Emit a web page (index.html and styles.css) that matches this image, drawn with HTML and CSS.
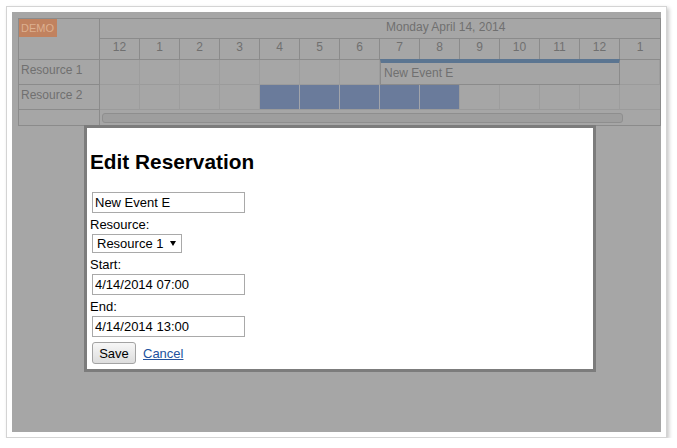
FILE: index.html
```html
<!DOCTYPE html>
<html>
<head>
<meta charset="utf-8">
<link rel="stylesheet" href="styles.css">
</head>
<body>
<div class="frame">
  <div class="stage">
    <div class="sched">
      <div class="hdr">
        <div class="corner"><span class="demo">DEMO</span></div>
        <div class="hdr-right">
          <div class="day">Monday April 14, 2014</div>
          <div class="hours">
            <div class="hc">12</div><div class="hc">1</div><div class="hc">2</div><div class="hc">3</div><div class="hc">4</div><div class="hc">5</div><div class="hc">6</div><div class="hc">7</div><div class="hc">8</div><div class="hc">9</div><div class="hc">10</div><div class="hc">11</div><div class="hc">12</div><div class="hc">1</div>
          </div>
        </div>
      </div>
      <div class="row">
        <div class="rh">Resource 1</div>
        <div class="cells">
          <div class="c"></div><div class="c"></div><div class="c"></div><div class="c"></div><div class="c"></div><div class="c"></div><div class="c"></div><div class="c"></div><div class="c"></div><div class="c"></div><div class="c"></div><div class="c"></div><div class="c"></div><div class="c"></div>
          <div class="event">New Event E</div>
        </div>
      </div>
      <div class="row">
        <div class="rh">Resource 2</div>
        <div class="cells">
          <div class="c"></div><div class="c"></div><div class="c"></div><div class="c"></div><div class="c sel"></div><div class="c sel"></div><div class="c sel"></div><div class="c sel"></div><div class="c sel last-sel"></div><div class="c"></div><div class="c"></div><div class="c"></div><div class="c"></div><div class="c"></div>
        </div>
      </div>
      <div class="row scroll">
        <div class="rh"></div>
        <div class="track"><div class="thumb"></div></div>
      </div>
    </div>

    <div class="modal">
      <h2>Edit Reservation</h2>
      <input class="field" type="text" value="New Event E">
      <div class="label">Resource:</div>
      <span class="select-wrap"><select class="select"><option>Resource 1</option></select></span>
      <div class="label">Start:</div>
      <input class="field" type="text" value="4/14/2014 07:00">
      <div class="label">End:</div>
      <input class="field" type="text" value="4/14/2014 13:00">
      <div class="actions">
        <button class="btn" type="button">Save</button><a class="cancel" href="#">Cancel</a>
      </div>
    </div>
  </div>
</div>
</body>
</html>
```

FILE: styles.css
```css
html, body {
  margin: 0;
  padding: 0;
  background: #ffffff;
}
body {
  padding: 6px 0 0 6px;
  font-family: "Liberation Sans", Arial, sans-serif;
}
.frame {
  width: 661px;
  height: 432px;
  box-sizing: border-box;
  border: 1px solid #d4d4d4;
  padding: 5px;
  background: #fff;
  box-shadow: 2px 2px 4px rgba(0, 0, 0, 0.22);
}
.stage {
  position: relative;
  width: 649px;
  height: 420px;
  box-sizing: border-box;
  padding: 6px 0 0 6px;
  background: #a6a6a6;
}

/* scheduler */
.sched {
  width: 643px;
  box-sizing: border-box;
  border: 1px solid #8b8b8b;
  font-size: 12px;
  color: #707070;
}
.hdr {
  display: flex;
  border-bottom: 1px solid #8b8b8b;
}
.corner {
  width: 81px;
  box-sizing: border-box;
  border-right: 1px solid #8b8b8b;
  height: 40px;
}
.demo {
  display: inline-block;
  background: #c1825f;
  color: #ddb08f;
  font-size: 11px;
  line-height: 18px;
  height: 18px;
  padding: 0 3px 0 2px;
  width: 38px;
  box-sizing: border-box;
  vertical-align: top;
}
.hdr-right {
  flex: 1;
}
.day {
  height: 19px;
  line-height: 16px;
  border-bottom: 1px solid #8b8b8b;
  padding-left: 286px;
}
.hours {
  display: flex;
  height: 20px;
}
.hc {
  width: 40px;
  box-sizing: border-box;
  border-right: 1px solid #8b8b8b;
  text-align: center;
  line-height: 16px;
}
.hc:last-child {
  border-right: none;
}
.row {
  display: flex;
  height: 25px;
}
.rh {
  width: 81px;
  box-sizing: border-box;
  border-right: 1px solid #8b8b8b;
  border-bottom: 1px solid #8b8b8b;
  padding-left: 2px;
  line-height: 20px;
}
.cells {
  position: relative;
  display: flex;
  flex: 1;
}
.c {
  width: 40px;
  box-sizing: border-box;
  border-right: 1px solid #9d9d9d;
  border-bottom: 1px solid #9b9b9b;
}
.c:last-child {
  border-right: none;
}
.c.sel {
  background: #6a7b9b;
  border-right-color: #a1a4ab;
}
.c.last-sel {
  border-right-color: #9d9d9d;
}
.event {
  position: absolute;
  left: 280px;
  top: -1px;
  width: 240px;
  height: 26px;
  box-sizing: border-box;
  border: 1px solid #8b8b8b;
  border-top: 4px solid #5b7591;
  background: #a5a5a5;
  padding: 3px 0 0 3px;
  line-height: 14px;
}
.row.scroll {
  height: 15px;
}
.row.scroll .rh {
  border-bottom: none;
}
.track {
  flex: 1;
  padding: 3px 0 0 2px;
}
.thumb {
  width: 521px;
  height: 10px;
  box-sizing: border-box;
  border: 1px solid #8e8e8e;
  border-radius: 3px;
  background: #9e9e9e;
}

/* modal */
.modal {
  position: absolute;
  left: 72px;
  top: 113px;
  width: 512px;
  height: 247px;
  box-sizing: border-box;
  border: 3px solid #7c7c7c;
  background: #fff;
  padding: 22px 3px 0;
  font-size: 13px;
  color: #000;
}
.modal h2 {
  margin: 0 0 18px;
  font-size: 20.8px;
  line-height: 24px;
  font-weight: bold;
}
.field {
  display: block;
  margin: 0 0 0 2px;
  width: 153px;
  height: 21px;
  box-sizing: border-box;
  border: 1px solid #a9a9a9;
  padding: 0 2px;
  font-family: "Liberation Sans", Arial, sans-serif;
  font-size: 13px;
  color: #000;
  background: #fff;
  outline: none;
}
.label {
  line-height: 15px;
  margin: 4px 0 2px;
}
.select-wrap {
  position: relative;
  display: block;
  margin-left: 2px;
  width: 90px;
  height: 19px;
}
.select {
  -webkit-appearance: none;
  appearance: none;
  display: block;
  width: 90px;
  height: 19px;
  box-sizing: border-box;
  border: 1px solid #a9a9a9;
  border-radius: 0;
  background: #fff;
  padding: 0 0 0 4px;
  font-family: "Liberation Sans", Arial, sans-serif;
  font-size: 13px;
  color: #000;
  outline: none;
}
.select-wrap::after {
  content: "";
  position: absolute;
  left: 78px;
  top: 7px;
  width: 0;
  height: 0;
  border-left: 3px solid transparent;
  border-right: 3px solid transparent;
  border-top: 5px solid #000;
  pointer-events: none;
}
.actions {
  display: flex;
  align-items: baseline;
  margin: 5px 0 0 2px;
}
.btn {
  width: 44px;
  height: 22px;
  box-sizing: border-box;
  border: 1px solid #a3a3a3;
  border-radius: 3px;
  background: linear-gradient(#f7f7f7, #dddddd);
  font-family: "Liberation Sans", Arial, sans-serif;
  font-size: 13px;
  color: #000;
  padding: 0;
}
.cancel {
  margin-left: 7px;
  color: #22529e;
  text-decoration: underline;
}
```
